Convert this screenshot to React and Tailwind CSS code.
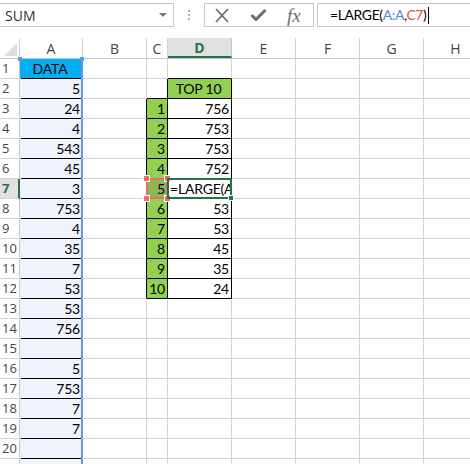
import React from 'react';

// column widths include the 1px gridline on the right
const COLS = [
  { key: 'A', w: 63 },
  { key: 'B', w: 64 },
  { key: 'C', w: 21 },
  { key: 'D', w: 64 },
  { key: 'E', w: 64 },
  { key: 'F', w: 64 },
  { key: 'G', w: 64 },
  { key: 'H', w: 64 },
];

const colA = ['DATA', 5, 24, 4, 543, 45, 3, 753, 4, 35, 7, 53, 53, 756, '', 5, 753, 7, 7, '', ''];
const top10 = [756, 753, 753, 752, '=LARGE(A', 53, 53, 45, 35, 24];

const cellFont = { fontFamily: 'Lato, "Open Sans", sans-serif' };
const uiFont = { fontFamily: '"Open Sans", "Noto Sans", sans-serif' };

const Handle = ({ className }) => (
  <div className={`absolute w-[7px] h-[7px] bg-[#ee6a6a] border border-white ${className}`} />
);

const Cell = ({ col, row }) => {
  const inTable = (c, r) => (c === 'C' && r >= 3 && r <= 12) || (c === 'D' && r >= 2 && r <= 12);
  const nextCol = { A: 'B', B: 'C', C: 'D', D: 'E' }[col];
  const rightBlack = inTable(col, row) || (nextCol && inTable(nextCol, row));
  const bottomBlack = inTable(col, row) || inTable(col, row + 1);

  let content = null;
  let bg = '';
  let align = 'justify-end';
  let extra = null;

  if (col === 'A') {
    const v = colA[row - 1];
    content = v;
    if (row === 1) {
      bg = 'bg-[#00b0f0]';
      align = 'justify-center';
    } else {
      bg = 'bg-[#eef3fd]';
    }
    return (
      <div
        className={`relative shrink-0 h-full flex items-end ${align} ${bg} border-r-2 border-r-[#6495ed] border-b border-b-[#d4d4d4]`}
        style={{ width: 63 }}
      >
        <div className="absolute left-[1px] right-0 bottom-[-1px] h-px bg-black" />
        <span className="pr-[1px] text-[14px] tracking-[-0.2px] text-black leading-[18px]" style={cellFont}>
          {content}
        </span>
        {row === 1 && (
          <>
            <div className="absolute -left-[2px] -top-[2px] w-[4px] h-[4px] bg-[#6495ed] z-10" />
            <div className="absolute -right-[3px] -top-[2px] w-[4px] h-[4px] bg-[#6495ed] z-10" />
          </>
        )}
      </div>
    );
  }

  if (col === 'C' && row >= 3 && row <= 12) {
    content = row - 2;
    bg = row === 7 ? 'bg-[#8cb656]' : 'bg-[#92d050]';
    if (row === 7) {
      extra = (
        <div className="absolute -left-[1px] -top-[1px] w-[22px] h-[21px] border-2 border-[#ee6a6a] z-10">
          <Handle className="-left-[5px] -top-[5px]" />
          <Handle className="-right-[5px] -top-[5px]" />
          <Handle className="-left-[5px] -bottom-[5px]" />
          <Handle className="-right-[5px] -bottom-[5px]" />
        </div>
      );
    }
  }

  if (col === 'D' && row === 2) {
    content = 'TOP 10';
    bg = 'bg-[#92d050]';
    align = 'justify-center';
  }

  if (col === 'D' && row >= 3 && row <= 12) {
    content = top10[row - 3];
    if (row === 7) {
      align = 'justify-start';
      extra = (
        <div className="absolute -left-[1px] -top-[1px] w-[65px] h-[21px] border-2 border-[#217346] z-20">
          <div className="absolute -right-[4px] -bottom-[4px] w-[6px] h-[6px] bg-[#217346] border border-white" />
        </div>
      );
    }
  }

  const w = COLS.find((c) => c.key === col).w;

  return (
    <div
      className={`relative shrink-0 h-full ${bg} border-r border-b ${
        rightBlack ? 'border-r-black' : 'border-r-[#d4d4d4]'
      } ${bottomBlack ? 'border-b-black' : 'border-b-[#d4d4d4]'}`}
      style={{ width: w }}
    >
      <div className={`w-full h-full overflow-hidden flex items-end ${align}`}>
        <span
          className={`text-[14px] tracking-[-0.2px] text-black leading-[18px] whitespace-nowrap ${
            align === 'justify-start' ? 'pl-[2px]' : 'pr-[2px]'
          }`}
          style={cellFont}
        >
          {content}
        </span>
      </div>
      {extra}
    </div>
  );
};

const Toolbar = () => (
  <div className="h-[38px] flex items-start pt-[3px] bg-white" style={uiFont}>
    {/* name box */}
    <div className="shrink-0 w-[174px] h-[24px] border border-l-0 border-[#c6c6c6] flex items-center justify-between pl-[5px] pr-[6px]">
      <span className="text-[14px] text-[#333]">SUM</span>
      <div className="w-0 h-0 border-l-[4px] border-r-[4px] border-t-[4px] border-l-transparent border-r-transparent border-t-[#7a7a7a]" />
    </div>
    {/* dots */}
    <div className="shrink-0 w-[30px] h-[24px] flex flex-col items-center justify-center gap-[2px]">
      <div className="w-[2px] h-[2px] bg-[#b0b0b0]" />
      <div className="w-[2px] h-[2px] bg-[#b0b0b0]" />
      <div className="w-[2px] h-[2px] bg-[#b0b0b0]" />
    </div>
    {/* cancel / enter / fx */}
    <div className="shrink-0 w-[110px] h-[24px] border border-[#c6c6c6] flex items-center">
      <svg width="14" height="15" viewBox="0 0 14 15" className="ml-[10px]">
        <path d="M1 1 L13 14 M13 1 L1 14" stroke="#6d6d6d" strokeWidth="1.8" fill="none" />
      </svg>
      <svg width="17" height="12" viewBox="0 0 17 12" className="ml-[21px]">
        <path d="M1.5 6 L6 10.5 L15.5 1" stroke="#6d6d6d" strokeWidth="3" fill="none" />
      </svg>
      <span
        className="ml-[20px] text-[19px] italic text-[#6d6d6d] leading-none"
        style={{ fontFamily: '"Liberation Serif", "DejaVu Serif", serif' }}
      >
        fx
      </span>
    </div>
    {/* formula bar */}
    <div className="shrink-0 ml-[3px] w-[160px] h-[24px] border border-r-0 border-[#c6c6c6] flex items-center">
      <span
        className="ml-[12px] text-[14px] tracking-[-0.4px] text-black leading-[18px] whitespace-nowrap"
        style={cellFont}
      >
        =LARGE(<span className="text-[#4f8ad9]">A:A</span>,<span className="text-[#e24c4c]">C7</span>)
      </span>
      <div className="ml-[2px] w-px h-[17px] bg-black" />
    </div>
  </div>
);

const HeaderRow = () => (
  <div className="h-[21px] flex border-b border-[#c6c6c6] bg-white" style={uiFont}>
    <div className="relative shrink-0 w-[20px] h-full border-r border-[#d4d4d4]">
      <svg width="13" height="13" viewBox="0 0 13 13" className="absolute right-[2px] bottom-[2px]">
        <path d="M13 0 L13 13 L0 13 Z" fill="#dcdcdc" />
      </svg>
    </div>
    {COLS.map((c) =>
      c.key === 'D' ? (
        <div
          key={c.key}
          className="shrink-0 h-full flex items-center justify-center bg-[#e1e1e1] border-r border-[#c6c6c6] border-b-2 border-b-[#217346] -mb-px"
          style={{ width: c.w }}
        >
          <span className="text-[14px] font-bold text-[#217346]">D</span>
        </div>
      ) : (
        <div
          key={c.key}
          className="shrink-0 h-full flex items-center justify-center border-r border-[#d4d4d4]"
          style={{ width: c.w }}
        >
          <span className="text-[14px] text-[#444]">{c.key}</span>
        </div>
      )
    )}
  </div>
);

const GridRow = ({ row }) => {
  const active = row === 7;
  return (
    <div className="h-[20px] flex">
      <div
        className={`shrink-0 w-[20px] h-full flex items-center pl-[2px] border-b border-[#d4d4d4] ${
          active ? 'bg-[#e1e1e1] border-r-2 border-r-[#217346]' : 'bg-white border-r border-r-[#c6c6c6]'
        }`}
        style={uiFont}
      >
        <span className={`text-[13px] leading-none ${active ? 'font-bold text-[#217346]' : 'text-[#444]'}`}>{row}</span>
      </div>
      {COLS.map((c) => (
        <Cell key={c.key} col={c.key} row={row} />
      ))}
    </div>
  );
};

export default function App() {
  const rows = Array.from({ length: 21 }, (_, i) => i + 1);
  return (
    <div className="w-[470px] h-[464px] overflow-hidden bg-white">
      <Toolbar />
      <HeaderRow />
      <div>
        {rows.map((r) => (
          <GridRow key={r} row={r} />
        ))}
      </div>
    </div>
  );
}
